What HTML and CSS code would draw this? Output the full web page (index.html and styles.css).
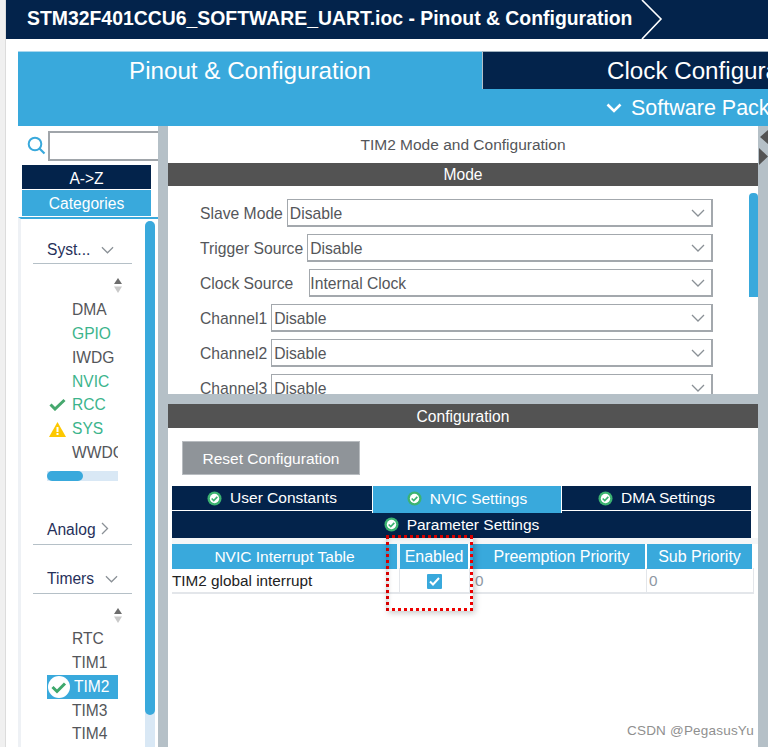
FILE: index.html
```html
<!DOCTYPE html>
<html lang="en">
<head>
<meta charset="utf-8">
<title>STM32CubeMX</title>
<link rel="stylesheet" href="styles.css">
</head>
<body>
<svg class="defs" width="0" height="0" aria-hidden="true">
  <symbol id="ok" viewBox="0 0 16 16">
    <circle cx="8" cy="8" r="7.5" fill="#3cb371"/>
    <circle cx="8" cy="8" r="5" fill="#fff"/>
    <path d="M5 8l2.2 2.2L11 6.2" fill="none" stroke="#3cb371" stroke-width="1.8"/>
  </symbol>
  <symbol id="chev" viewBox="0 0 14 8">
    <path d="M1 1l6 6 6-6" fill="none" stroke="#8a9096" stroke-width="1.3"/>
  </symbol>
  <symbol id="updown" viewBox="0 0 8 15">
    <path d="M4 0l4 6H0z" fill="#6d6d6d"/>
    <path d="M0 8.500h8L4 15z" fill="#c9c9c9"/>
  </symbol>
</svg>
<div class="strip"></div>
<div class="app">
  <header class="topbar">
    <h1 class="title">STM32F401CCU6_SOFTWARE_UART.ioc - Pinout &amp; Configuration</h1>
    <svg class="crumb" width="24" height="39" viewBox="0 0 24 39"><path d="M2 0l19 19L2 39" fill="none" stroke="#fff" stroke-width="1.6"/></svg>
  </header>
  <div class="workspace">
    <nav class="maintabs">
      <div class="maintab active">Pinout &amp; Configuration</div>
      <div class="maintab">Clock Configuration</div>
    </nav>
    <div class="subbar">
      <svg class="subchev" width="16" height="10" viewBox="0 0 16 10"><path d="M1.500 1.500L8 8l6.500-6.500" fill="none" stroke="#fff" stroke-width="2.600"/></svg>
      <span class="subtext">Software Packs</span>
    </div>
    <div class="panes">
      <aside class="side">
        <div class="search">
          <svg class="searchicon" width="19" height="19" viewBox="0 0 19 19"><circle cx="8" cy="8" r="6.300" fill="none" stroke="#39a9dc" stroke-width="2"/><path d="M12.500 12.500l5 5" stroke="#39a9dc" stroke-width="2.200"/></svg>
          <div class="searchbox"></div>
        </div>
        <div class="sort dark">A-&gt;Z</div>
        <div class="sort blue">Categories</div>
        <div class="sidebody">
          <div class="sidecontent">
            <div class="group first">Syst...<svg class="gchev" width="13" height="8"><use href="#chev"/></svg></div>
            <div class="updown"><svg width="8" height="15"><use href="#updown"/></svg></div>
            <ul class="items">
              <li class="item">DMA</li>
              <li class="item green">GPIO</li>
              <li class="item nudge">IWDG</li>
              <li class="item green">NVIC</li>
              <li class="item green"><svg class="marker" width="17" height="13" viewBox="0 0 17 13"><path d="M1.500 6.500l4.500 4.500L15.500 2" fill="none" stroke="#46a86e" stroke-width="3"/></svg>RCC</li>
              <li class="item green"><svg class="marker" width="17" height="15" viewBox="0 0 17 15"><path d="M8.500 0L17 15H0z" fill="#fdc800"/><path d="M8.500 5v5M8.500 11v2" stroke="#fff" stroke-width="2"/></svg>SYS</li>
              <li class="item nudge">WWDG</li>
            </ul>
            <div class="hscroll"><div class="hthumb"></div></div>
            <div class="group analog">Analog<svg class="gside" width="8" height="13" viewBox="0 0 8 13"><path d="M1 1l5.500 5.500L1 12" fill="none" stroke="#8a9096" stroke-width="1.300"/></svg></div>
            <div class="group timers">Timers<svg class="gchev" width="13" height="8"><use href="#chev"/></svg></div>
            <div class="updown"><svg width="8" height="15"><use href="#updown"/></svg></div>
            <ul class="items timerlist">
              <li class="item">RTC</li>
              <li class="item">TIM1</li>
              <li class="item selected"><svg class="tim2ok" width="22" height="22" viewBox="0 0 22 22"><circle cx="11" cy="11" r="11" fill="#fff"/><path d="M4.500 11l4.500 4.500 8-8" fill="none" stroke="#3ea86c" stroke-width="3"/></svg>TIM2</li>
              <li class="item">TIM3</li>
              <li class="item">TIM4</li>
            </ul>
          </div>
          <div class="vscroll"><div class="vthumb"></div></div>
        </div>
      </aside>
      <main class="content">
        <div class="pagetitle">TIM2 Mode and Configuration</div>
        <div class="sectionbar modebar">Mode</div>
        <section class="mode">
          <div class="form">
            <div class="row"><span class="lbl">Slave Mode</span><div class="select">Disable<svg class="selchev" width="14" height="8"><use href="#chev"/></svg></div></div>
            <div class="row"><span class="lbl">Trigger Source</span><div class="select">Disable<svg class="selchev" width="14" height="8"><use href="#chev"/></svg></div></div>
            <div class="row"><span class="lbl wide">Clock Source</span><div class="select tight">Internal Clock<svg class="selchev" width="14" height="8"><use href="#chev"/></svg></div></div>
            <div class="row"><span class="lbl">Channel1</span><div class="select">Disable<svg class="selchev" width="14" height="8"><use href="#chev"/></svg></div></div>
            <div class="row"><span class="lbl">Channel2</span><div class="select">Disable<svg class="selchev" width="14" height="8"><use href="#chev"/></svg></div></div>
            <div class="row"><span class="lbl">Channel3</span><div class="select">Disable<svg class="selchev" width="14" height="8"><use href="#chev"/></svg></div></div>
          </div>
          <div class="modescroll"></div>
        </section>
        <div class="gap"></div>
        <div class="sectionbar">Configuration</div>
        <section class="config">
          <div class="reset">Reset Configuration</div>
          <div class="tabs">
            <div class="tab"><svg class="okicon" width="15" height="15"><use href="#ok"/></svg>User Constants</div>
            <div class="tab current"><svg class="okicon" width="15" height="15"><use href="#ok"/></svg>NVIC Settings</div>
            <div class="tab"><svg class="okicon" width="15" height="15"><use href="#ok"/></svg>DMA Settings</div>
            <div class="tab full"><svg class="okicon" width="15" height="15"><use href="#ok"/></svg>Parameter Settings</div>
          </div>
          <div class="tablewrap">
            <div class="thead">
              <div class="th narrow">NVIC Interrupt Table</div>
              <div class="th">Enabled</div>
              <div class="th shifted">Preemption Priority</div>
              <div class="th">Sub Priority</div>
            </div>
            <div class="trow">
              <div class="td name">TIM2 global interrupt</div>
              <div class="td center"><span class="check"><svg width="15" height="15" viewBox="0 0 15 15"><path d="M3 7.500l3 3 6-6.500" fill="none" stroke="#fff" stroke-width="2"/></svg></span></div>
              <div class="td zero first">0</div>
              <div class="td zero">0</div>
            </div>
          </div>
          <div class="dots"></div>
        </section>
        <div class="watermark">CSDN @PegasusYu</div>
      </main>
      <div class="edge">
        <svg width="10" height="40" viewBox="0 0 10 40"><path d="M10 4L2 11l8 7zM1 22l9 8.500L1 39z" fill="#545454"/></svg>
      </div>
    </div>
  </div>
</div>
</body>
</html>
```
FILE: styles.css
```css
* { box-sizing: border-box; }
html, body { margin: 0; height: 100%; }
body {
  display: flex;
  width: 768px;
  height: 747px;
  overflow: hidden;
  background: #fff;
  font-family: "Liberation Sans", Arial, sans-serif;
  color: #54565a;
}
.defs { position: absolute; }
.strip { width: 6px; flex: none; background: #f0f0f0; border-right: 1px solid #dcdcdc; }
.app { flex: 1; min-width: 0; display: flex; flex-direction: column; }
.topbar {
  height: 39px; flex: none; display: flex; align-items: center;
  background: #03234b; padding-left: 21px;
}
.title { margin: 0; font-size: 19.400px; font-weight: 700; color: #fff; white-space: nowrap; position: relative; top: -1px; }
.crumb { margin-left: 8px; flex: none; }
.workspace { flex: 1; min-height: 0; padding: 12px 0 0 12px; display: flex; flex-direction: column; }
.maintabs { display: flex; height: 38px; flex: none; overflow: hidden; }
.maintab {
  background: #03234b; color: #fff; font-size: 24.200px; line-height: 38px; white-space: nowrap;
  padding-left: 124px; flex: 1; border-top: 1px solid #9fb0bd; border-left: 1px solid #b4c0c8;
}
.maintab.active { background: #39a9dc; flex: none; width: 464px; padding-left: 111px; border-left: 0; border-top-color: #a8d7ee; }
.subbar {
  height: 37px; flex: none; background: #39a9dc; color: #fff; display: flex; align-items: center;
  padding-left: 588px; font-size: 21.500px; white-space: nowrap; overflow: hidden;
}
.subtext { position: relative; top: 1px; }
.subchev { margin-right: 9px; flex: none; }
.panes { flex: 1; min-height: 0; display: flex; }
.side { width: 150px; flex: none; background: #fff; border-right: 10px solid #b5c0c7; display: flex; flex-direction: column; min-height: 0; overflow: hidden; }
.search { height: 39px; flex: none; display: flex; align-items: center; padding-left: 9px; }
.searchicon { flex: none; margin-right: 2px; }
.searchbox { flex: 1; height: 30px; border: 2px solid #a0a5aa; border-right: 0; background: #fff; }
.sort { width: 129px; margin-left: 4px; flex: none; color: #fff; text-align: center; font-size: 15.600px; }
.sort.dark { background: #03234b; height: 24px; line-height: 27px; }
.sort.blue { background: #39a9dc; height: 26px; line-height: 28px; margin-top: 1px; }
.sidebody { flex: 1; min-height: 0; display: flex; margin-top: 1px; border-top: 2px solid #39a9dc; border-left: 3px solid #eef1f5; padding-top: 2px; }
.sidecontent { flex: none; width: 124px; font-size: 15.600px; }
.group { margin-left: 12px; width: 99px; padding-left: 14px; border-bottom: 1px solid #b5c0c7; color: #26305a; display: flex; align-items: center; white-space: nowrap; }
.group.first { padding-top: 15px; height: 43px; }
.group.analog { margin-top: 21px; height: 43px; padding-top: 14px; }
.group.timers { margin-top: 4px; height: 45px; padding-top: 16px; }
.gchev { margin-left: 11px; }
.gside { margin-left: 5px; margin-top: -2px; }
.updown { height: 16px; margin-top: 14px; padding-left: 93px; display: flex; }
.items { list-style: none; margin: 4.300px 0 0 26px; padding: 0; width: 71px; overflow: hidden; }
.timerlist { margin-top: 3.400px; }
.item { height: 23.800px; line-height: 24px; padding-left: 25px; white-space: nowrap; position: relative; color: #54565a; }
.item.green { color: #3cb48c; }
.item.selected { background: #39a9dc; color: #fff; padding-left: 27px; }
.marker { position: absolute; left: 2px; top: 5px; }
.tim2ok { position: absolute; left: 1px; top: 1px; }
.hscroll { margin: 6px 0 0 26px; width: 71px; height: 10px; background: #d9e8f5; }
.hthumb { width: 36px; height: 10px; border-radius: 5px; background: #39a9dc; }
.vscroll { width: 10px; flex: none; background: #d9e8f5; border-radius: 5px 5px 0 0; }
.vthumb { height: 494px; border-radius: 5px; background: #39a9dc; }
.content { width: 590px; flex: none; position: relative; display: flex; flex-direction: column; min-height: 0; }
.pagetitle { height: 37px; line-height: 37px; text-align: center; font-size: 15.500px; flex: none; }
.sectionbar { height: 24px; line-height: 25px; background: #535353; color: #fff; text-align: center; font-size: 15.600px; flex: none; }
.sectionbar.modebar { height: 23px; line-height: 23px; }
.mode { height: 208px; flex: none; overflow: hidden; display: flex; position: relative; }
.form { width: 581px; padding: 13px 36px 0 32px; display: flex; flex-direction: column; gap: 7px; }
.row { display: flex; height: 28px; flex: none; align-items: center; gap: 3px; font-size: 15.700px; white-space: nowrap; line-height: 28px; }
.lbl { position: relative; top: 1px; }
.lbl:not(.wide) { margin-right: 1px; }
.lbl.wide { margin-right: 13px; }
.select { flex: 1; height: 28px; border: 1px solid #a3a8ad; border-bottom-width: 2px; border-right-width: 2px; line-height: 27px; padding: 1px 6px 0 2px; display: flex; align-items: center; justify-content: space-between; }
.select.tight { padding-left: 0; }
.selchev { flex: none; }
.modescroll { width: 9px; height: 104px; margin-top: 7px; background: #39a9dc; border-radius: 4px 4px 0 0; }
.gap { height: 10px; flex: none; background: #b5c0c7; }
.config { flex: 1; min-height: 0; position: relative; padding: 13px 0 0 4px; }
.reset { width: 178px; height: 34px; margin-left: 10px; background: #8f9499; border: 1px solid #b8bcc0; color: #fff; font-size: 15.500px; line-height: 33px; text-align: center; }
.tabs { display: grid; grid-template-columns: 200px 190px 189px; grid-template-rows: 25px 27px; margin-top: 11px; width: 579px; font-size: 15.500px; color: #fff; }
.tab { background: #03234b; border-bottom: 1px solid #fff; display: flex; justify-content: center; align-items: center; white-space: nowrap; position: relative; }
.tab.current { background: #39a9dc; border-left: 1px solid #fff; border-right: 1px solid #fff; border-bottom: 0; height: 27px; padding-bottom: 2px; z-index: 1; }
.tab.full { grid-column: 1 / -1; border-bottom: 0; }
.okicon { margin-right: 8px; flex: none; }
.tablewrap { padding-top: 6px; width: 586px; height: 210px; background: linear-gradient(#f5f6f7 6px, #fff 6px); }
.thead, .trow { display: grid; grid-template-columns: 228px 70px 177px 107px; width: 582px; }
.thead { height: 24px; }
.th { background: #39a9dc; color: #fff; font-size: 16px; text-align: center; line-height: 25px; border-right: 2px solid #fff; white-space: nowrap; }
.th.narrow { font-size: 15.500px; border-right: 3px solid #f5f6f7; }
.th.shifted { padding-left: 8px; }
.trow { height: 26px; border-bottom: 2px solid #e3e6ea; background: #fff; }
.td { line-height: 26px; border-right: 1px solid #e3e6ea; font-size: 15.300px; }
.td.name { color: #222; white-space: nowrap; }
.td.center { display: flex; justify-content: center; align-items: center; }
.td.zero { color: #8f98a3; padding-left: 2px; }
.td.zero.first { padding-left: 5px; }
.check { display: block; width: 15px; height: 15px; background: #39a9dc; border-radius: 1px; }
.check svg { display: block; }
.dots {
  position: absolute; left: 218px; top: 107px; width: 87px; height: 76px;
  background:
    repeating-linear-gradient(90deg, #f00000 0 3px, transparent 3px 6px) top left / 100% 3px no-repeat,
    repeating-linear-gradient(90deg, #f00000 0 3px, transparent 3px 6px) bottom left / 100% 3px no-repeat,
    repeating-linear-gradient(0deg, #f00000 0 3px, transparent 3px 6px) top left / 3px 100% no-repeat,
    repeating-linear-gradient(0deg, #f00000 0 3px, transparent 3px 6px) top right / 3px 100% no-repeat;
  box-shadow: 2px 2px 6px rgba(0,0,0,.22), inset 2px 2px 5px rgba(0,0,0,.18);
}
.watermark { position: absolute; right: 4px; bottom: 9px; font-size: 13.500px; letter-spacing: .2px; color: #8f8f8f; }
.edge { flex: 1; min-width: 0; background: #b5c0c7; overflow: hidden; }
.edge svg { display: block; }
```
